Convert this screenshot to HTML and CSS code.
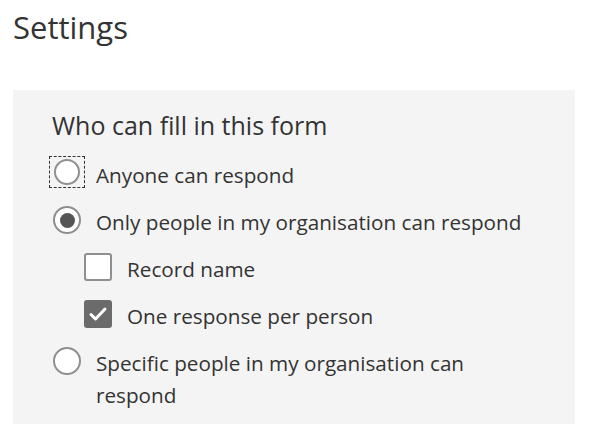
FILE: index.html
```html
<!DOCTYPE html>
<html lang="en">
<head>
  <meta charset="UTF-8">
  <meta name="viewport" content="width=device-width, initial-scale=1.0">
  <title>Settings</title>
  <link rel="stylesheet" href="styles.css">
</head>
<body>
  <h1 class="page-title">Settings</h1>

  <div class="panel">
    <h2 class="panel-title">Who can fill in this form</h2>

    <div class="option">
      <span class="focus-ring"><span class="radio"></span></span>
      <span class="label">Anyone can respond</span>
    </div>

    <div class="option">
      <span class="radio checked"></span>
      <span class="label">Only people in my organisation can respond</span>
    </div>

    <div class="option sub">
      <span class="checkbox"></span>
      <span class="label">Record name</span>
    </div>

    <div class="option sub">
      <span class="checkbox checked">
        <svg viewBox="0 0 20 20" width="20" height="20"><path d="M3 10.5l4.5 4.5 9.5-10" fill="none" stroke="#fff" stroke-width="3" stroke-linecap="round" stroke-linejoin="round"/></svg>
      </span>
      <span class="label">One response per person</span>
    </div>

    <div class="option">
      <span class="radio"></span>
      <span class="label">Specific people in my organisation can<br>respond</span>
    </div>
  </div>
</body>
</html>
```

FILE: styles.css
```css
body {
  margin: 0;
  font-family: "Open Sans", "Noto Sans", sans-serif;
  color: #333;
  background: #fff;
}
.page-title {
  margin: 0;
  padding: 7px 13px 0;
  font-size: 31px;
  font-weight: 400;
  line-height: 40px;
  color: #333;
}
.panel {
  margin: 43px 14px 0 13px;
  height: 334px;
  box-sizing: border-box;
  background: #f4f4f4;
  padding: 18px 30px 0 39px;
}
.panel-title {
  margin: 0 0 17px;
  font-size: 25px;
  font-weight: 400;
  line-height: 34px;
}
.option {
  display: flex;
  align-items: flex-start;
  gap: 15px;
  margin-bottom: 15px;
  padding-left: 1px;
  font-size: 20.7px;
  line-height: 32px;
}
.option.sub {
  padding-left: 32px;
}
.label {
  white-space: nowrap;
}
.focus-ring {
  width: 36px;
  height: 32px;
  margin: -3px -4px 0 -4px;
  box-sizing: border-box;
  border: 1.5px dashed #333;
  display: flex;
  align-items: center;
  justify-content: center;
  flex-shrink: 0;
}
.radio {
  width: 28px;
  height: 28px;
  box-sizing: border-box;
  border: 2px solid #8f8f8f;
  border-radius: 50%;
  background: #fff;
  flex-shrink: 0;
  display: flex;
  align-items: center;
  justify-content: center;
}
.focus-ring .radio {
  width: 26px;
  height: 26px;
}
.radio.checked::after {
  content: "";
  width: 15px;
  height: 15px;
  border-radius: 50%;
  background: #555;
}
.checkbox {
  width: 28px;
  height: 28px;
  box-sizing: border-box;
  border: 2px solid #8f8f8f;
  border-radius: 3px;
  background: #fff;
  flex-shrink: 0;
  display: flex;
  align-items: center;
  justify-content: center;
}
.checkbox.checked {
  background: #6b6b6b;
  border-color: #6b6b6b;
}
```
